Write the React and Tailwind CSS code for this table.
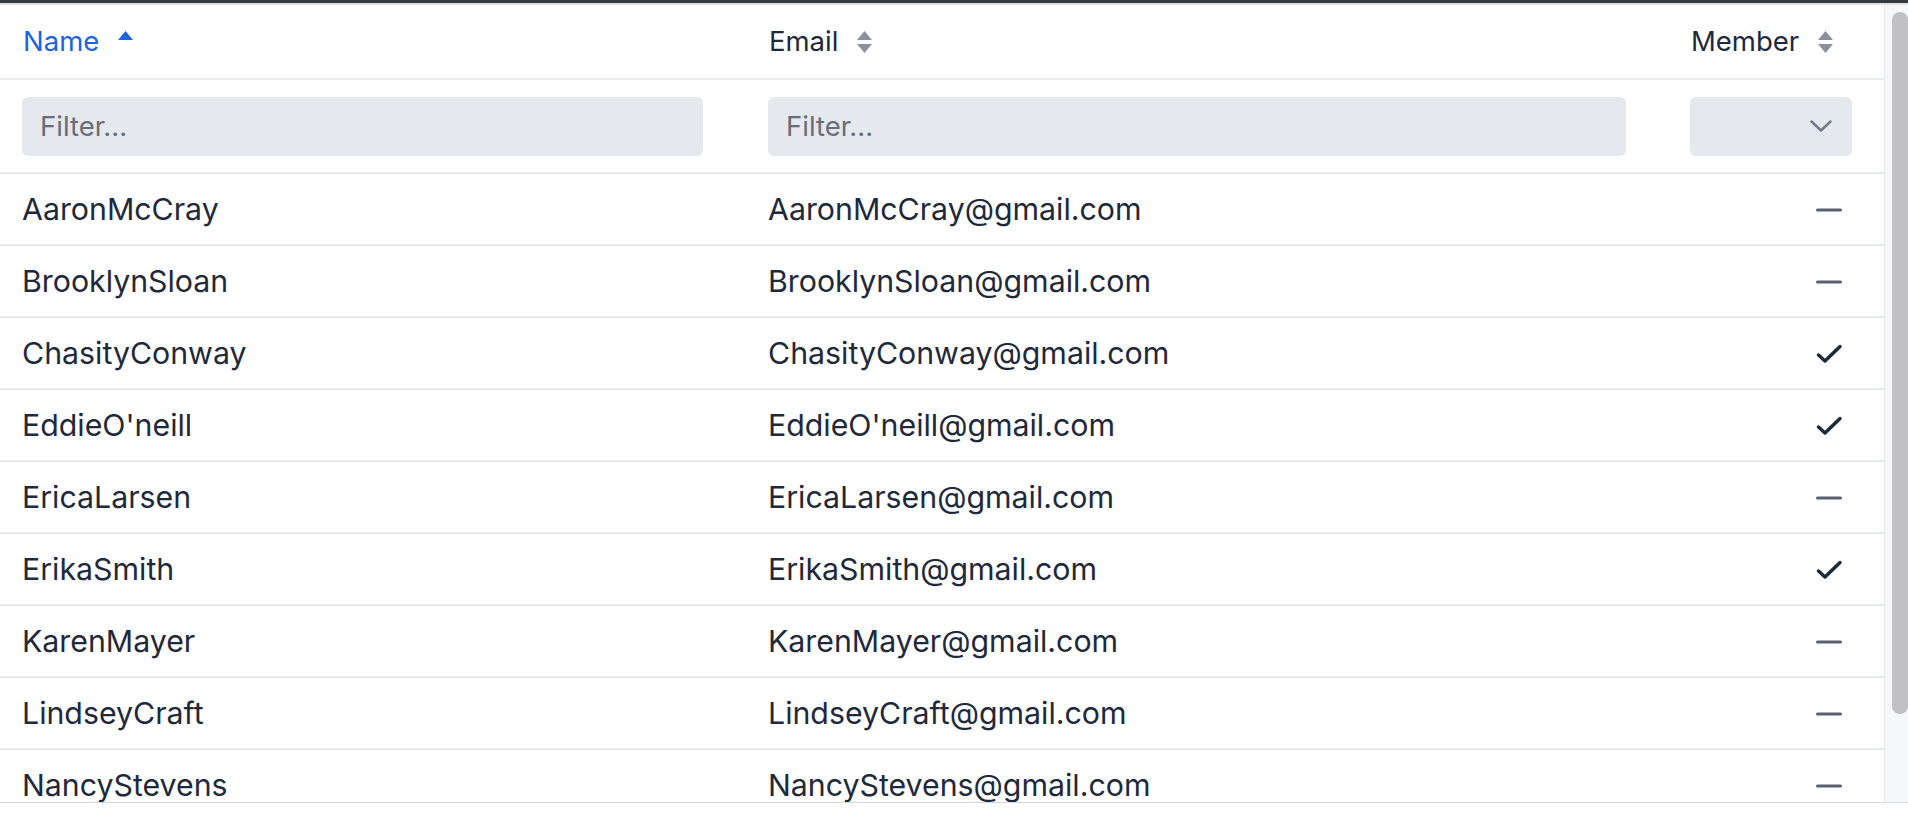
import React from "react";

const rows = [
  ["AaronMcCray", false],
  ["BrooklynSloan", false],
  ["ChasityConway", true],
  ["EddieO'neill", true],
  ["EricaLarsen", false],
  ["ErikaSmith", true],
  ["KarenMayer", false],
  ["LindseyCraft", false],
  ["NancyStevens", false],
];

function SortIcon({ active }) {
  if (active) {
    return (
      <svg width="15" height="22" viewBox="0 0 15 22" className="shrink-0">
        <polygon points="0,9 7.5,0 15,9" fill="#1d64d8" />
      </svg>
    );
  }
  return (
    <svg width="15" height="22" viewBox="0 0 15 22" className="shrink-0">
      <polygon points="0,9 7.5,0 15,9" fill="#8b909a" />
      <polygon points="0,13 7.5,22 15,13" fill="#8b909a" />
    </svg>
  );
}

function Check() {
  return (
    <svg width="32" height="32" viewBox="0 0 32 32">
      <polyline
        points="5.5,17 12,23 27,8.5"
        fill="none"
        stroke="#1e293b"
        strokeWidth="3.5"
        strokeLinecap="round"
        strokeLinejoin="round"
      />
    </svg>
  );
}

function Dash() {
  return (
    <svg width="32" height="32" viewBox="0 0 32 32">
      <line
        x1="4.5"
        y1="16"
        x2="27.5"
        y2="16"
        stroke="#566072"
        strokeWidth="3"
        strokeLinecap="round"
      />
    </svg>
  );
}

export default function App() {
  return (
    <div
      className="w-[1908px] h-[838px] bg-white overflow-hidden flex flex-col text-[#1e293b]"
      style={{ fontFamily: "Inter, 'Open Sans', sans-serif" }}
    >
      <div className="h-[3px] bg-[#363b40] shrink-0" />
      <div className="h-[2px] bg-[#dde0e4] shrink-0" />
      <div className="h-[798px] shrink-0 flex border-b border-[#d5d8dc]">
        <div className="w-[1885px] border-r border-[#e6e8eb] overflow-hidden">
          {/* header */}
          <div className="grid grid-cols-[746px_922px_216px] h-[75px] border-b-2 border-[#e8eaee] text-[27.5px]">
            <div className="pl-[23px] flex items-center gap-[19px]">
              <span className="text-[#1d64d8]">Name</span>
              <SortIcon active />
            </div>
            <div className="pl-[23px] flex items-center gap-[19px]">
              <span>Email</span>
              <SortIcon />
            </div>
            <div className="pl-[23px] flex items-center gap-[19px]">
              <span>Member</span>
              <SortIcon />
            </div>
          </div>
          {/* filters */}
          <div className="grid grid-cols-[746px_922px_216px] h-[94px] border-b-2 border-[#e8eaee] items-center">
            <div className="pl-[22px]">
              <div className="w-[681px] h-[59px] rounded-md bg-[#e5e8ed] flex items-center pl-[18px] pt-[2px] text-[27.5px] text-[#676e7b]">
                Filter...
              </div>
            </div>
            <div className="pl-[22px]">
              <div className="w-[858px] h-[59px] rounded-md bg-[#e5e8ed] flex items-center pl-[18px] pt-[2px] text-[27.5px] text-[#676e7b]">
                Filter...
              </div>
            </div>
            <div className="pl-[22px]">
              <div className="w-[162px] h-[59px] rounded-md bg-[#e5e8ed] flex items-center justify-end pr-[20px]">
                <svg width="22" height="12" viewBox="0 0 22 12">
                  <polyline
                    points="1.5,1.5 11,10.5 20.5,1.5"
                    fill="none"
                    stroke="#737a86"
                    strokeWidth="2.5"
                    strokeLinecap="round"
                    strokeLinejoin="round"
                  />
                </svg>
              </div>
            </div>
          </div>
          {/* rows */}
          {rows.map(([name, member]) => (
            <div
              key={name}
              className="grid grid-cols-[746px_922px_216px] h-[72px] shrink-0 border-b-2 border-[#e8eaee] items-center text-[30.3px]"
            >
              <div className="pl-[22px] pt-[2px] whitespace-nowrap">{name}</div>
              <div className="pl-[22px] pt-[2px] whitespace-nowrap">{name}@gmail.com</div>
              <div className="flex justify-end pr-[39px] pt-[1px]">
                {member ? <Check /> : <Dash />}
              </div>
            </div>
          ))}
        </div>
        <div className="w-[23px] bg-[#f6f7f8] pt-[7px] pl-[7px]">
          <div className="w-[16px] h-[702px] rounded-full bg-[#c1c1c4]" />
        </div>
      </div>
    </div>
  );
}
